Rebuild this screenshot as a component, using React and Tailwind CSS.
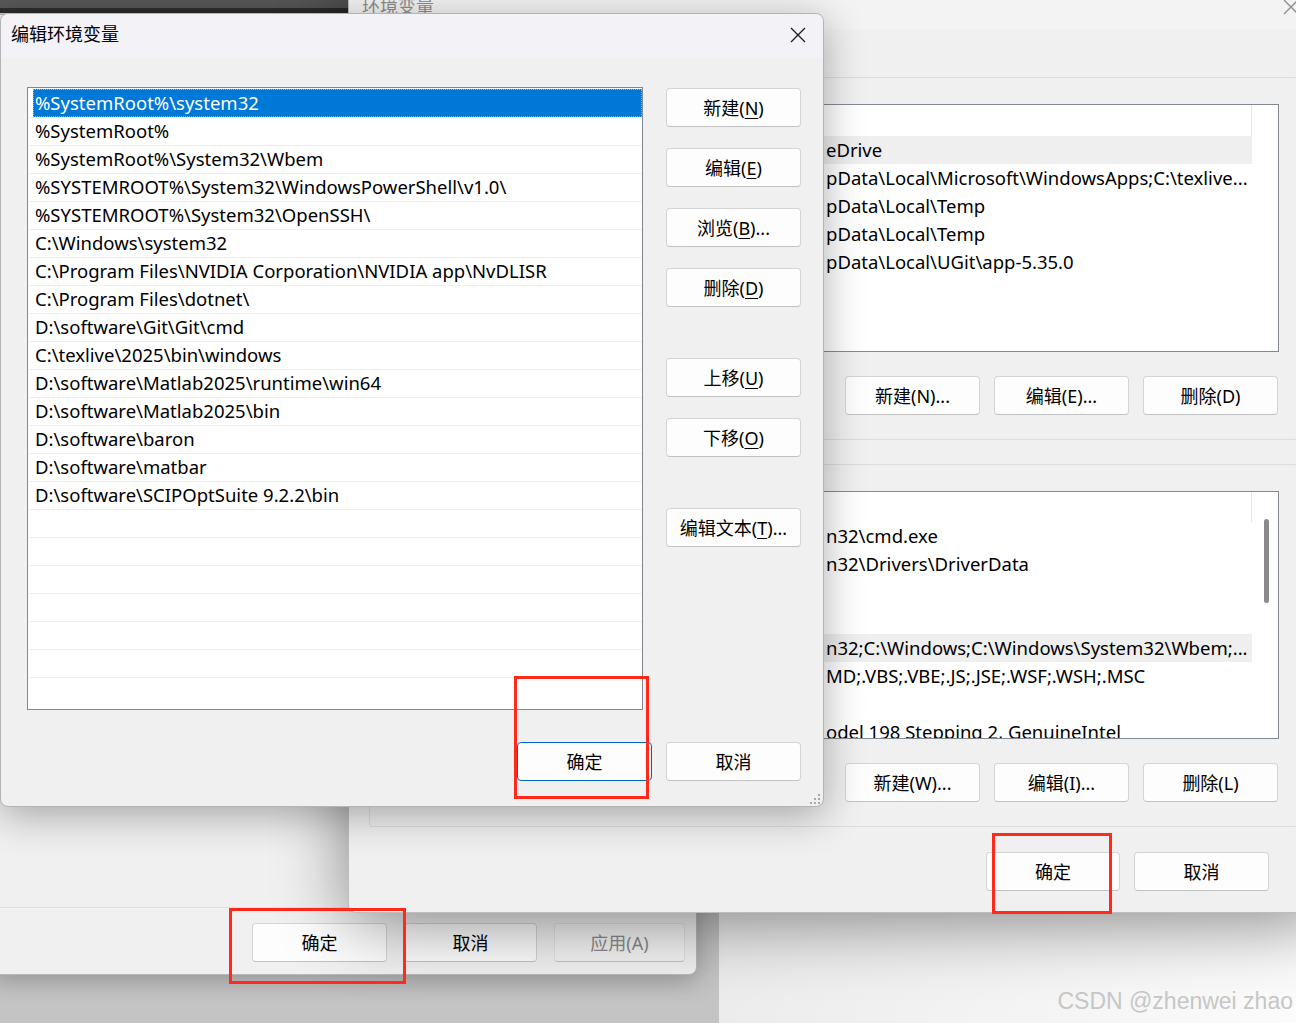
import React from 'react';

// 编辑环境变量 dialog on top of 环境变量 and 系统属性 windows

const paths = [
  '%SystemRoot%\\system32',
  '%SystemRoot%',
  '%SystemRoot%\\System32\\Wbem',
  '%SYSTEMROOT%\\System32\\WindowsPowerShell\\v1.0\\',
  '%SYSTEMROOT%\\System32\\OpenSSH\\',
  'C:\\Windows\\system32',
  'C:\\Program Files\\NVIDIA Corporation\\NVIDIA app\\NvDLISR',
  'C:\\Program Files\\dotnet\\',
  'D:\\software\\Git\\Git\\cmd',
  'C:\\texlive\\2025\\bin\\windows',
  'D:\\software\\Matlab2025\\runtime\\win64',
  'D:\\software\\Matlab2025\\bin',
  'D:\\software\\baron',
  'D:\\software\\matbar',
  'D:\\software\\SCIPOptSuite 9.2.2\\bin',
];

const userRows = [
  { text: 'eDrive', active: true },
  { text: 'pData\\Local\\Microsoft\\WindowsApps;C:\\texlive...' },
  { text: 'pData\\Local\\Temp' },
  { text: 'pData\\Local\\Temp' },
  { text: 'pData\\Local\\UGit\\app-5.35.0' },
];

const sysRows = [
  { text: 'n32\\cmd.exe' },
  { text: 'n32\\Drivers\\DriverData' },
  { text: '' },
  { text: '' },
  { text: 'n32;C:\\Windows;C:\\Windows\\System32\\Wbem;...', active: true },
  { text: 'MD;.VBS;.VBE;.JS;.JSE;.WSF;.WSH;.MSC' },
  { text: '' },
  { text: 'odel 198 Stepping 2, GenuineIntel' },
];

function Btn({ children, className = '', primary = false, disabled = false }) {
  return (
    <div
      className={`flex items-center justify-center h-[39px] rounded-[4px] border text-[18px] leading-none ${
        primary ? 'border-[#0067c0]' : 'border-[#d4d4d4] border-b-[#c2c2c2]'
      } ${disabled ? 'bg-[#f4f4f4] text-[#8a8a8a] border-[#e2e2e2]' : 'bg-[#fdfdfd] text-black'} ${className}`}
    >
      {children}
    </div>
  );
}

function Key({ children }) {
  return <span className="underline underline-offset-[3px] decoration-1">{children}</span>;
}

function CloseX({ className = '' }) {
  return (
    <svg width="16" height="16" viewBox="0 0 16 16" className={className}>
      <path d="M1 1 L15 15 M15 1 L1 15" stroke="currentColor" strokeWidth="1.3" fill="none" />
    </svg>
  );
}

function Grip() {
  return (
    <svg width="12" height="12" viewBox="0 0 12 12">
      <g fill="#a8a8a8">
        <rect x="9" y="1" width="2" height="2" />
        <rect x="5" y="5" width="2" height="2" />
        <rect x="9" y="5" width="2" height="2" />
        <rect x="1" y="9" width="2" height="2" />
        <rect x="5" y="9" width="2" height="2" />
        <rect x="9" y="9" width="2" height="2" />
      </g>
    </svg>
  );
}

function VarList({ rows, headerH, thumb }) {
  return (
    <div className="flex w-[890px] h-[248px] border border-[#848a92] bg-white overflow-hidden">
      <div className="flex flex-col w-[862px] shrink-0">
        <div className={`${headerH} shrink-0 flex justify-end`}>
          <div className="w-px h-full bg-[#e5e5e5]" />
        </div>
        {rows.map((r, i) => (
          <div
            key={i}
            className={`h-[28px] shrink-0 flex items-center pl-[436px] text-[18.5px] whitespace-nowrap ${
              r.active ? 'bg-[#efefef]' : ''
            }`}
          >
            {r.text}
          </div>
        ))}
      </div>
      <div className="flex-1 flex justify-center pl-[2px]">
        {thumb && <div className="mt-[27px] w-[5px] h-[84px] rounded-full bg-[#8a8a8a]" />}
      </div>
    </div>
  );
}

function GroupBox({ rows, headerH, thumb, labels }) {
  return (
    <div className="ml-[20px] w-[929px] border border-[#dcdcdc] rounded-[3px] pt-[26px] pb-[24px] pl-[19px]">
      <VarList rows={rows} headerH={headerH} thumb={thumb} />
      <div className="mt-[24px] w-[890px] flex justify-end gap-[14px] pr-[1px]">
        {labels.map((l) => (
          <Btn key={l} className="w-[135px] h-[38px]">
            {l}
          </Btn>
        ))}
      </div>
    </div>
  );
}

export default function App() {
  const listRows = [...paths, ...Array(7).fill('')];
  return (
    <div className="relative w-[1296px] h-[1023px] overflow-hidden font-['Noto_Sans','Noto_Sans_CJK_SC',sans-serif] text-black">
      {/* desktop behind the windows */}
      <div className="flex w-full h-full">
        <div className="w-[719px] flex flex-col bg-gradient-to-b from-[#d6d6d6] to-[#c4c4c4]">
          <div className="h-[8px] bg-[#5a5a5a]" />
          <div className="h-[5px] bg-[#2f2f2f]" />
        </div>
        <div className="flex-1 bg-gradient-to-r from-[#ececec] to-[#fbfbfb]" />
      </div>

      {/* 系统属性 (back) */}
      <div className="absolute left-[-10px] top-[14px] w-[707px] h-[961px] rounded-b-[8px] bg-[#f0f0f0] border border-[#b8b8b8] shadow-[0_6px_24px_rgba(0,0,0,0.25)] flex flex-col">
        <div className="flex-1" />
        <div className="h-[67px] border-t border-[#dedede] flex justify-end gap-[17px] pt-[15px] pr-[11px]">
          <Btn className="w-[135px]">确定</Btn>
          <Btn className="w-[133px]">取消</Btn>
          <Btn className="w-[131px]" disabled>
            应用(A)
          </Btn>
        </div>
      </div>

      {/* 环境变量 (middle) */}
      <div className="absolute left-[348px] top-[-20px] w-[979px] h-[933px] rounded-[8px] bg-[#f0f0f0] border border-[#bdbdbd] shadow-[0_10px_70px_rgba(0,0,0,0.45)] flex flex-col">
        <div className="h-[48px] shrink-0 bg-[#f3f3f3] rounded-t-[8px] flex items-center justify-between pl-[13px] pr-[27px] pt-[2px]">
          <span className="text-[18px] text-[#8c8c8c]">环境变量</span>
          <CloseX className="text-[#8c8c8c] mt-[2px]" />
        </div>
        <div className="pt-[48px]">
          <GroupBox rows={userRows} headerH="h-[31px]" labels={['新建(N)...', '编辑(E)...', '删除(D)']} />
          <div className="mt-[24px]">
            <GroupBox
              rows={sysRows}
              headerH="h-[30px]"
              thumb
              labels={['新建(W)...', '编辑(I)...', '删除(L)']}
            />
          </div>
          <div className="mt-[25px] flex justify-end gap-[14px] pr-[57px]">
            <Btn className="w-[134px]">确定</Btn>
            <Btn className="w-[135px]">取消</Btn>
          </div>
        </div>
      </div>

      {/* 编辑环境变量 (front) */}
      <div className="absolute left-0 top-[13px] w-[824px] h-[794px] rounded-[8px] bg-[#f0f0f0] border border-[#b4b4b4] shadow-[0_8px_40px_rgba(0,0,0,0.32)] flex flex-col">
        <div className="h-[44px] shrink-0 bg-[#f3f2f7] rounded-t-[8px] flex items-center justify-between pl-[10px] pr-[17px] pb-[3px]">
          <span className="text-[18px]">编辑环境变量</span>
          <CloseX className="text-[#1b1b1b]" />
        </div>
        <div className="flex pt-[29px] pl-[26px]">
          <div className="w-[616px] h-[623px] border border-[#828790] bg-white overflow-hidden pt-px">
            {listRows.map((p, i) =>
              i === 0 ? (
                <div
                  key={i}
                  className="ml-[5px] h-[28px] flex items-center pl-[2px] bg-[#0078d7] text-white text-[18.5px] whitespace-nowrap outline-1 outline-dotted outline-[#d9a066] -outline-offset-1"
                >
                  {p}
                </div>
              ) : (
                <div
                  key={i}
                  className="ml-px h-[28px] flex items-center pl-[6px] pb-px border-t border-[#f0f0f0] text-[18.5px] whitespace-nowrap"
                >
                  {p}
                </div>
              )
            )}
          </div>
          <div className="ml-[23px] mt-px flex flex-col w-[135px]">
            <Btn>
              新建(<Key>N</Key>)
            </Btn>
            <Btn className="mt-[21px]">
              编辑(<Key>E</Key>)
            </Btn>
            <Btn className="mt-[21px]">
              浏览(<Key>B</Key>)...
            </Btn>
            <Btn className="mt-[21px]">
              删除(<Key>D</Key>)
            </Btn>
            <Btn className="mt-[51px]">
              上移(<Key>U</Key>)
            </Btn>
            <Btn className="mt-[21px]">
              下移(<Key>O</Key>)
            </Btn>
            <Btn className="mt-[51px]">
              编辑文本(<Key>T</Key>)...
            </Btn>
          </div>
        </div>
        <div className="mt-[32px] flex justify-end gap-[14px] pr-[22px]">
          <Btn className="w-[135px]" primary>
            确定
          </Btn>
          <Btn className="w-[135px]">取消</Btn>
        </div>
        <div className="flex-1 flex items-end justify-end pr-[2px] pb-[1px]">
          <Grip />
        </div>
      </div>

      {/* red highlight boxes */}
      <div className="absolute left-[514px] top-[676px] w-[135px] h-[123px] border-[3px] border-[#ff2a1c]" />
      <div className="absolute left-[992px] top-[833px] w-[120px] h-[81px] border-[3px] border-[#ff2a1c]" />
      <div className="absolute left-[229px] top-[908px] w-[177px] h-[76px] border-[3px] border-[#ff2a1c]" />

      {/* watermark */}
      <div className="absolute right-[3px] bottom-[10px] text-[23px] leading-none text-[#c6c6c6] font-['Liberation_Sans',sans-serif]">
        CSDN @zhenwei zhao
      </div>
    </div>
  );
}
